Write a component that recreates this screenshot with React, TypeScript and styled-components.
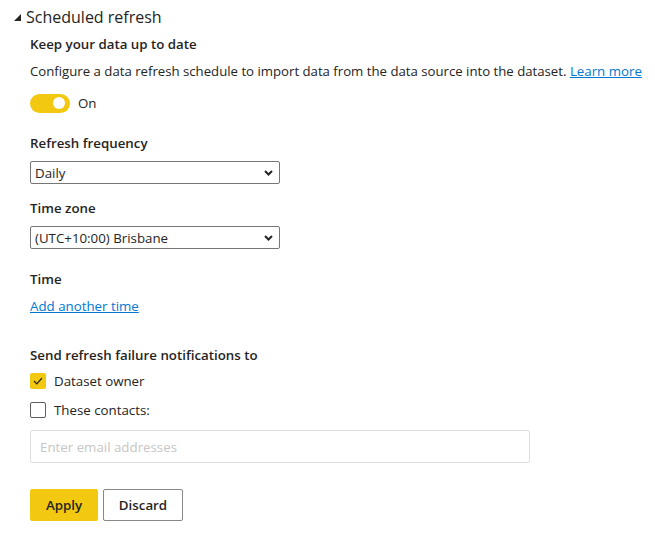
import React, { FC } from "react";
import styled, { createGlobalStyle } from "styled-components";

const GlobalStyle = createGlobalStyle`
  body {
    margin: 0;
    background: #ffffff;
    font-family: "Segoe UI", "Open Sans", "Noto Sans", sans-serif;
    color: #252423;
  }
`;

const Page = styled.div`
  width: 655px;
  height: 536px;
  padding-top: 5px;
  box-sizing: border-box;
`;

const SectionHeader = styled.div`
  display: flex;
  align-items: center;
  height: 24px;
  padding-left: 14px;
  gap: 5px;
  font-size: 16px;
  color: #252423;
`;

const Body = styled.div`
  padding-left: 30px;
  display: flex;
  flex-direction: column;
  align-items: flex-start;
`;

const Heading = styled.div<{ $mt: number }>`
  margin-top: ${({ $mt }) => $mt}px;
  font-size: 13.3px;
  line-height: 20px;
  font-weight: 600;
`;

const Text = styled.div<{ $mt: number }>`
  margin-top: ${({ $mt }) => $mt}px;
  font-size: 13.2px;
  line-height: 20px;
  white-space: nowrap;
`;

const Link = styled.a<{ $mt?: number }>`
  margin-top: ${({ $mt }) => $mt ?? 0}px;
  font-size: 13.3px;
  line-height: 20px;
  color: #0078d4;
  text-decoration: underline;
  cursor: pointer;
`;

const ToggleRow = styled.div`
  margin-top: 12px;
  display: flex;
  align-items: center;
  gap: 8px;
  height: 20px;
  font-size: 13.3px;
`;

const Toggle = styled.div<{ $on: boolean }>`
  width: 40px;
  height: 19px;
  border-radius: 10px;
  background: ${({ $on }) => ($on ? "#f2c811" : "#c8c6c4")};
  display: flex;
  align-items: center;
  justify-content: ${({ $on }) => ($on ? "flex-end" : "flex-start")};
  padding: 0 5px;
  box-sizing: border-box;
`;

const Knob = styled.div`
  width: 12px;
  height: 12px;
  border-radius: 50%;
  background: #ffffff;
`;

const SelectBox = styled.div`
  margin-top: 8px;
  width: 250px;
  height: 23px;
  box-sizing: border-box;
  border: 1px solid #767676;
  border-radius: 2px;
  display: flex;
  align-items: center;
  justify-content: space-between;
  padding: 0 6px 0 4px;
  font-size: 13.3px;
`;

const CheckRow = styled.div<{ $mt: number }>`
  margin-top: ${({ $mt }) => $mt}px;
  display: flex;
  align-items: center;
  gap: 8px;
  height: 20px;
  font-size: 13.3px;
`;

const Box = styled.div<{ $checked: boolean }>`
  width: 16px;
  height: 16px;
  box-sizing: border-box;
  border-radius: 2px;
  border: 1px solid ${({ $checked }) => ($checked ? "#f2c811" : "#605e5c")};
  background: ${({ $checked }) => ($checked ? "#f2c811" : "#ffffff")};
  display: flex;
  align-items: center;
  justify-content: center;
`;

const EmailInput = styled.div`
  margin-top: 10px;
  width: 500px;
  height: 33px;
  box-sizing: border-box;
  border: 1px solid #e1dfdd;
  border-radius: 2px;
  display: flex;
  align-items: center;
  padding-left: 9px;
  font-size: 13.3px;
  color: #c8c6c4;
`;

const Buttons = styled.div`
  margin-top: 26px;
  display: flex;
  gap: 5px;
`;

const Button = styled.button<{ $primary?: boolean; $width: number }>`
  width: ${({ $width }) => $width}px;
  height: 32px;
  box-sizing: border-box;
  border-radius: 2px;
  font-family: inherit;
  font-size: 13.3px;
  font-weight: 600;
  color: #252423;
  padding: 0;
  background: ${({ $primary }) => ($primary ? "#f2c811" : "#ffffff")};
  border: 1px solid ${({ $primary }) => ($primary ? "#f2c811" : "#8a8886")};
`;

const Chevron = () => (
  <svg width="9" height="6" viewBox="0 0 9 6">
    <polyline points="1,1 4.5,4.5 8,1" fill="none" stroke="#252423" strokeWidth="2" />
  </svg>
);

const Select: FC<{ value: string }> = ({ value }) => (
  <SelectBox>
    <span>{value}</span>
    <Chevron />
  </SelectBox>
);

const Checkbox: FC<{ checked: boolean; text: string; mt: number }> = ({ checked, text, mt }) => (
  <CheckRow $mt={mt}>
    <Box $checked={checked}>
      {checked && (
        <svg width="10" height="8" viewBox="0 0 10 8">
          <polyline points="1,4 3.8,6.8 9,1" fill="none" stroke="#252423" strokeWidth="1.2" />
        </svg>
      )}
    </Box>
    <span>{text}</span>
  </CheckRow>
);

export default function App() {
  return (
    <Page>
      <GlobalStyle />
      <SectionHeader>
        <svg width="7" height="7" viewBox="0 0 7 7">
          <polygon points="7,0 7,7 0,7" fill="#252423" />
        </svg>
        <span>Scheduled refresh</span>
      </SectionHeader>
      <Body>
        <Heading $mt={5}>Keep your data up to date</Heading>
        <Text $mt={7}>
          Configure a data refresh schedule to import data from the data source into the dataset.{" "}
          <Link>Learn more</Link>
        </Text>
        <ToggleRow>
          <Toggle $on>
            <Knob />
          </Toggle>
          <span>On</span>
        </ToggleRow>
        <Heading $mt={20}>Refresh frequency</Heading>
        <Select value="Daily" />
        <Heading $mt={14}>Time zone</Heading>
        <Select value="(UTC+10:00) Brisbane" />
        <Heading $mt={20}>Time</Heading>
        <Link $mt={7}>Add another time</Link>
        <Heading $mt={29}>Send refresh failure notifications to</Heading>
        <Checkbox checked mt={6} text="Dataset owner" />
        <Checkbox checked={false} mt={9} text="These contacts:" />
        <EmailInput>Enter email addresses</EmailInput>
        <Buttons>
          <Button $primary $width={68}>Apply</Button>
          <Button $width={80}>Discard</Button>
        </Buttons>
      </Body>
    </Page>
  );
}
